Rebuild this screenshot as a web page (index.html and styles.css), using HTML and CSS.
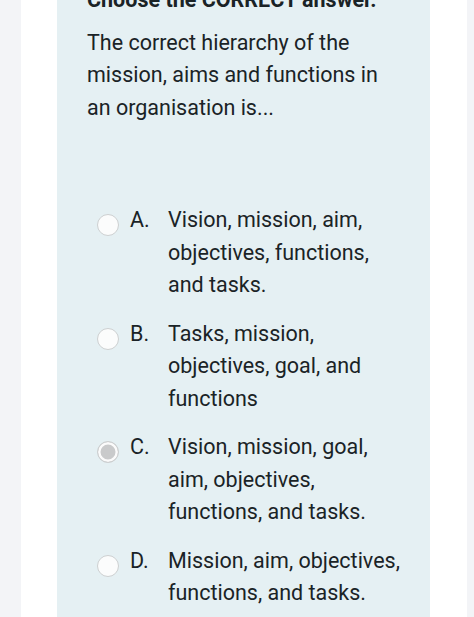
FILE: index.html
```html
<!DOCTYPE html>
<html lang="en">
<head>
<meta charset="utf-8">
<title>Question</title>
<link rel="stylesheet" href="styles.css">
</head>
<body>
<div class="page">
  <div class="gutter"></div>
  <main class="sheet">
    <section class="panel">
      <h2 class="instruction">Choose the CORRECT answer.</h2>
      <p class="question">The correct hierarchy of the mission, aims and functions in an organisation is...</p>
      <ul class="options">
        <li class="option"><span class="radio"></span><span class="letter">A.</span><span class="text">Vision, mission, aim, objectives, functions, and tasks.</span></li>
        <li class="option"><span class="radio"></span><span class="letter">B.</span><span class="text">Tasks, mission, objectives, goal, and functions</span></li>
        <li class="option"><span class="radio checked"></span><span class="letter">C.</span><span class="text">Vision, mission, goal, aim, objectives, functions, and tasks.</span></li>
        <li class="option"><span class="radio"></span><span class="letter">D.</span><span class="text">Mission, aim, objectives, functions, and tasks.</span></li>
      </ul>
    </section>
  </main>
  <div class="gutter"></div>
</div>
</body>
</html>
```
FILE: styles.css
```css
html, body {
  margin: 0;
  padding: 0;
  background: #ffffff;
}
body {
  font-family: Roboto, "Liberation Sans", sans-serif;
  color: #1a2326;
  font-size: 21.5px;
  line-height: 32.5px;
}
.page {
  display: grid;
  grid-template-columns: 21px 1fr 7px;
  height: 617px;
  overflow: hidden;
}
.gutter {
  background: #f3f4f7;
}
.sheet {
  padding: 0 37px 0 36px;
  background: #ffffff;
}
.panel {
  display: flow-root;
  background: #e5f0f3;
  height: 100%;
  padding: 0 24px 0 30px;
  box-sizing: border-box;
}
.instruction {
  margin: -16px 0 0 0;
  font-size: 21.5px;
  font-weight: 700;
  line-height: 32.5px;
}
.question {
  margin: 10px 6px 0 0;
}
.options {
  list-style: none;
  margin: 80px 0 0 0;
  padding: 0;
  display: flex;
  flex-direction: column;
  gap: 16px;
}
.option {
  display: flex;
  align-items: flex-start;
}
.radio {
  flex: none;
  width: 22px;
  height: 22px;
  box-sizing: border-box;
  border: 1.5px solid #cdd0d1;
  border-radius: 50%;
  background: #fbfcfc;
  margin: 10px 11px 0 10px;
}
.radio.checked {
  background: #c9cacb;
  box-shadow: inset 0 0 0 2.5px #fbfbfb;
}
.letter {
  flex: none;
  width: 38px;
}
.text {
  flex: 1;
}
```
